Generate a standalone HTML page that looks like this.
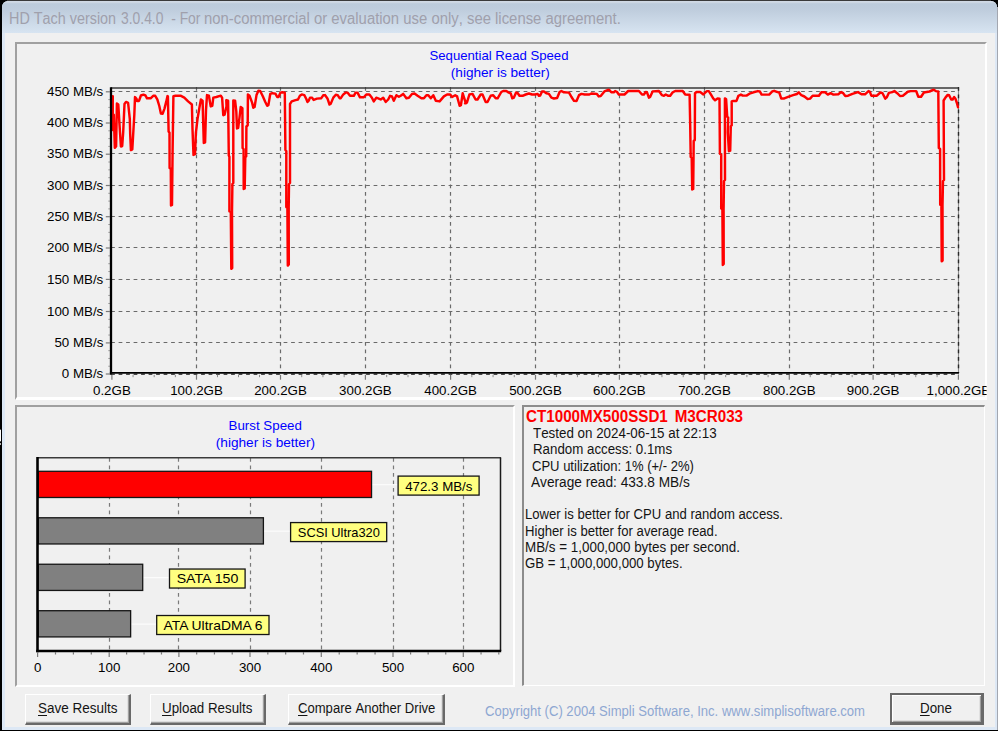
<!DOCTYPE html>
<html><head><meta charset="utf-8"><title>HD Tach</title>
<style>
html,body{margin:0;padding:0}
body{width:998px;height:731px;overflow:hidden;position:relative;background:#000;font-family:"Liberation Sans",sans-serif;font-kerning:none}
div,span{position:absolute;box-sizing:border-box}
#win{left:1.9px;top:1.2px;width:995.4px;height:728.6px;background:#dde8f5;border-radius:6px 6px 0 0;overflow:hidden}
#tb{left:0;top:0;width:100%;height:31.6px;background:linear-gradient(#d2dbe6 0,#ccd6e2 1.5px,#bccbdb 2.8px,#bfcddd 28%,#d7e4f1 100%)}
#tedge{left:7px;top:0;width:984px;height:1.2px;background:#3a3a3a}
#redge{left:997.2px;top:7px;width:.8px;height:722.6px;background:#a3a7b0}
#title{left:0;top:10.4px;width:700px;height:18px}
#title span{top:0;font-size:15.6px;line-height:18px;color:#a0a0ac;white-space:pre;transform-origin:0 0}
#client{left:5px;top:32.6px;width:990.2px;height:694.2px;background:#f0f0f0}
.pn{border-style:solid;border-width:2.4px;border-color:#a0a0a0 #fff #fff #a0a0a0}
#p1{left:14.8px;top:42.2px;width:971.9px;height:357.6px;border-width:2.5px 2.5px 3.1px 2.5px}
#p2{left:14.8px;top:404.9px;width:500.2px;height:282.6px}
#p3{left:521.5px;top:404.9px;width:463.8px;height:281.6px;border-width:2.6px 1.2px 1.4px 2.6px;border-color:#8c8c8c #fff #fff #8c8c8c}
svg{position:absolute;left:0;top:0}
.g{stroke:#6a6a6a;stroke-width:1.2;stroke-dasharray:3.75 3.75}
.t{stroke:#7a7a7a;stroke-width:1.2}
.t2{stroke:#8c8c8c;stroke-width:1}
.a{font:13.33px "Liberation Sans",sans-serif;fill:#000}
.b{font:13.33px "Liberation Sans",sans-serif;fill:#0000ff}
.ms{font-size:15.5px;line-height:18px;white-space:pre;color:#141414;transform-origin:0 0}
#hdr{left:526px;top:407.6px;font:bold 16px/18px "Liberation Sans",sans-serif;color:#ff0000;white-space:pre;word-spacing:2.8px;transform:scaleX(.949);transform-origin:0 0}
.btn{background:#f0f0f0;border-style:solid;border-width:1.3px 2.5px 2.5px 1.3px;border-color:#fff #696969 #696969 #fff;box-shadow:inset -1.2px -1.2px 0 #a0a0a0}
.btn span{top:4.3px}
u{text-decoration:underline;text-underline-offset:1.5px;text-decoration-thickness:1.2px}
#copy{left:484.6px;top:701.6px;color:#8ea7d2}
</style></head><body>
<div id="win"><div id="tb"></div></div>
<div id="redge"></div><div id="tedge"></div>
<div id="title"><span style="left:9.4px;transform:scaleX(.922)">HD Tach version </span><span style="left:120.5px;transform:scaleX(.89)">3.0.4.0  - For </span><span style="left:203.8px;transform:scaleX(.954)">non-commercial or evaluation use only, see license agreement.</span></div>
<div id="client"></div>
<div id="p1" class="pn"></div>
<div id="p2" class="pn"></div>
<div id="p3" class="pn"></div>
<svg width="998" height="731" viewBox="0 0 998 731">
<defs><clipPath id="cl"><rect x="0" y="376" width="986.6" height="24"/></clipPath></defs>
<line x1="111.1" y1="91.5" x2="958.4" y2="91.5" class="g"/>
<line x1="111.1" y1="122.5" x2="958.4" y2="122.5" class="g"/>
<line x1="111.1" y1="153.5" x2="958.4" y2="153.5" class="g"/>
<line x1="111.1" y1="185.5" x2="958.4" y2="185.5" class="g"/>
<line x1="111.1" y1="216.5" x2="958.4" y2="216.5" class="g"/>
<line x1="111.1" y1="247.5" x2="958.4" y2="247.5" class="g"/>
<line x1="111.1" y1="279.5" x2="958.4" y2="279.5" class="g"/>
<line x1="111.1" y1="311.5" x2="958.4" y2="311.5" class="g"/>
<line x1="111.1" y1="342.5" x2="958.4" y2="342.5" class="g"/>
<line x1="196.5" y1="87.05" x2="196.5" y2="373" class="g"/>
<line x1="280.5" y1="87.05" x2="280.5" y2="373" class="g"/>
<line x1="365.5" y1="87.05" x2="365.5" y2="373" class="g"/>
<line x1="450.5" y1="87.05" x2="450.5" y2="373" class="g"/>
<line x1="535.5" y1="87.05" x2="535.5" y2="373" class="g"/>
<line x1="619.5" y1="87.05" x2="619.5" y2="373" class="g"/>
<line x1="704.5" y1="87.05" x2="704.5" y2="373" class="g"/>
<line x1="789.5" y1="87.05" x2="789.5" y2="373" class="g"/>
<line x1="873.5" y1="87.05" x2="873.5" y2="373" class="g"/>
<line x1="958.5" y1="87.05" x2="958.5" y2="373" class="g"/>
<line x1="111" y1="88" x2="958.9" y2="88" stroke="#3a3a3a" stroke-width="1.5"/>
<line x1="958.5" y1="88" x2="958.5" y2="373" stroke="#8a8a8a" stroke-width="1.1"/>
<line x1="958.5" y1="87.05" x2="958.5" y2="373" class="g" style="stroke:#2a2a2a;stroke-width:1.3"/>
<polyline points="112.8,96.3 112.8,130.1 113.8,114.7 114.8,147.8 116.1,146.5 116.9,103.5 118.3,104.5 119.6,126 120.9,146.5 122.2,146 123.2,132.2 124.5,104 126,101.9 128.1,102.9 129.8,118.8 130.2,134.2 130.9,150.1 132.3,149.4 133.3,132.2 134.3,115.3 135,97.1 136.5,98.8 137,100.9 139,100.9 140.9,95.5 143.4,94.7 145.5,95.5 147,98.3 150.6,98.3 153.2,95.8 155.2,95.8 157.3,99.4 159.3,106 160.9,113.5 162.6,113.7 164.5,108.6 166.3,101.4 167.5,96.1 167.9,96.3 168.6,131.6 169.5,132.8 169.6,168 170.8,169 171,205.5 172,205 172.6,150.5 173.4,96.3 175.5,95.7 180.5,95.7 184.3,97.6 188.1,101.4 191.9,104.5 192.5,129.1 193.5,154.9 195,154.2 195.9,132.8 197.5,119 199.4,107.7 200.9,99.5 202.6,100.7 203.2,122.8 203.8,142.9 205.1,142.3 206,110.2 207,95.1 208.9,95.7 210.7,106.4 212.3,105.8 213.3,97.6 216.4,97 220.8,95.7 222.1,97.6 223.3,115.2 224.6,114.6 226.5,106.4 226.3,100.1 228.1,100.7 228.8,155.5 229.4,156.8 229.4,211.3 230.8,212 231.3,268.8 232.2,268 232,212 232.4,184 233.3,183 233.3,100.5 235.1,100.7 236.3,111.4 237,128.4 238.2,127.8 239.5,117.7 240.7,107 242.4,108.3 242.6,148 243.6,149.2 243.7,189 244.7,188.5 245.3,157 246.2,156.5 246.4,126.5 247.7,125.3 247.9,94.4 249.5,95.7 252.1,102.6 253.3,107.7 254.6,107 256.5,95.1 258.4,90.7 260.2,91 262.8,96.3 265.3,102 267.2,105.8 268.4,105.1 270.3,93.8 272.2,93.2 275.4,93.6 277.2,97 278.5,97 280.4,92.8 282.3,92.3 284.8,92.8 285.4,150 286.3,151 286.3,207 287.4,208 287.8,265.6 288.8,264.5 288.7,208 289,184 290,183 290,104 291.7,101.4 295.5,100.1 298,99.5 299.9,95.7 301.8,94.4 304.3,95.1 306.2,98.8 307.5,102 308.7,100.7 310,97.6 311.9,97.6 313.7,99.9 316.9,98.6 321.3,98.2 323.2,95.3 325.1,95.1 327.6,98.8 329.5,104.5 330.7,103.9 333.3,97.6 335.8,94.8 337.7,95.1 339.6,98.2 340.8,98.2 343.3,94.4 345.8,92.6 347.5,92.6 350,95.8 353.8,95.8 355.6,92.6 357.5,92.6 360,97.3 363.8,97.3 366.3,94.5 369.4,94.5 371.9,97.7 373.8,101.4 376.3,97.7 378.2,98.3 380.7,99.5 383.2,97.7 385.7,102 388.2,99.5 390.1,95.8 392,96.4 393.8,100.8 396.4,95.2 398.9,96.8 400.7,95.8 403.2,93.9 406.4,98.3 408.9,97.7 412,93.9 414.5,93.5 417.6,95.8 421.4,98.3 423.9,98.3 426.4,95.2 428.3,95.2 430.8,98.3 433.3,95.2 435.8,100.8 439.6,101.4 443.9,96.4 447.1,94.5 450.2,94.5 452.1,97 455.2,95.2 457.1,96.4 459.6,105.8 460.9,105.2 462.7,93.3 465.9,103.3 465,103.3 466.9,102.7 469.4,94.5 472.5,93.9 475.6,99.5 477.5,99.5 480.7,94.5 482.5,94.5 485.7,102 487.5,102 490.7,95.8 493.2,95.2 495.7,98.3 497.6,98.3 501.3,92 503.2,91 506.3,91 508.8,92.6 510.7,93.3 512.3,98.3 513.8,97.7 516.1,92.6 517.6,93 519.5,95.8 522.6,95.8 525.7,94.5 528.9,93.5 532,94.5 535.1,94.5 537.6,93.9 538.9,95.8 540.2,95.5 542,91.4 543.9,91.4 546.4,93.3 548.9,93.9 551.4,97.7 553.9,98.5 557.1,98 559.6,92 561.4,91 563.9,92.3 569,92.6 571.5,97 574,100.8 576.5,101 579,95.2 581.5,93.9 584.6,94.5 585,94.5 589.4,94.5 591.3,93.5 596.9,93.9 598.8,96.4 600.7,96 604.4,91.4 608.2,89.8 609.4,90.1 611.3,92.3 613.8,92.3 615.1,91 616.9,91.8 618.8,94.5 624.5,94.5 628.2,91 638.9,91 642,94.5 643.9,94.5 645.7,92 647,92.3 648.9,97.7 650.1,97 652.6,91.4 658.9,91 662,95.2 663.9,95.8 665.8,94.5 668.3,95.8 670.2,95.8 672.7,92.3 675.2,91 682.7,91 685.2,94.5 689.6,94.8 690.2,125 690.7,157 691.7,158 692.2,189.5 693.2,189 693.7,141 694.8,140 695,93.3 696.5,92 700.2,92 703.4,94.5 705,92.7 706.9,91.1 708.8,91.1 711.3,95.2 713.2,98.4 715.1,100.3 717.6,98.4 719.5,98.6 719.9,153.8 721.2,154.6 721.2,208.5 722.4,209.3 722.8,264.9 723.7,264 723.6,209 724,181 725,180 724.9,98.4 726.1,99 727.2,116.6 728.2,117.5 727.8,132.4 728.9,151.2 730.2,150.6 730.8,126.1 731.7,125.4 731.7,101.5 733.3,100.9 736.5,100.9 738.4,95.8 740.9,94.6 742.8,95.6 746.5,95.6 750.3,93.3 753.5,92.3 757.9,91.1 759.8,91.4 761.6,94.6 769.2,94.6 772.3,91.4 774.2,90.8 776.8,91.8 779.3,92.7 781.2,98.4 784.3,98.4 788.1,96.9 793.1,95.2 796.9,94 798.8,92.3 801.3,95.2 804.4,96.5 807.6,99 810.1,98.6 812.6,95.8 818.9,95.8 821.4,92.3 825.2,92.3 827.8,94.6 830.6,93.2 833.4,94.6 838.3,94.3 841.1,92.1 843.2,93.2 845.3,96 848.1,95.7 852.4,93.9 858,92.1 861.5,94.3 865,94.3 868.5,91.1 869.9,91.8 871.3,95.7 876.9,95.7 880.4,92.5 882.5,93.2 885.3,98.6 886.7,97.4 888.8,92.9 892.3,92.1 894.4,91.1 897.2,93.2 900,96 902.9,95.7 907.8,91.8 910.6,91.1 916.2,91.1 918.3,96.7 921.1,96.7 923.9,92.5 929.5,91.5 933.7,89.7 935.8,91.1 938.3,91.5 938.8,148 940.1,149 940.2,204.7 941.4,205.5 941.7,261.3 942.6,260.5 942.5,205 943,181 944,180 943.6,100.5 945.6,97.4 947.7,94.9 949.1,95.3 951.2,99.5 952.6,99.5 954.1,97.1 955.5,98.8 956.9,103 958,107.2" fill="none" stroke="#ff0000" stroke-width="2.45" stroke-linejoin="round" stroke-linecap="round"/>
<line x1="111" y1="87.3" x2="111" y2="374.8" stroke="#000" stroke-width="2.3"/>
<line x1="109.9" y1="372.85" x2="958.9" y2="372.85" stroke="#000" stroke-width="1.9"/>
<line x1="111.1" y1="374.2" x2="958.9" y2="374.2" stroke="#111" stroke-width="1.3" stroke-dasharray="3.75 3.75"/>
<line x1="105.8" y1="91.8" x2="110" y2="91.8" class="t"/>
<line x1="108.4" y1="99.6" x2="110" y2="99.6" class="t2"/>
<line x1="108.4" y1="107.4" x2="110" y2="107.4" class="t2"/>
<line x1="108.4" y1="115.2" x2="110" y2="115.2" class="t2"/>
<text x="103.3" y="95.95" text-anchor="end" class="a">450 MB/s</text>
<line x1="105.8" y1="123" x2="110" y2="123" class="t"/>
<line x1="108.4" y1="130.8" x2="110" y2="130.8" class="t2"/>
<line x1="108.4" y1="138.6" x2="110" y2="138.6" class="t2"/>
<line x1="108.4" y1="146.4" x2="110" y2="146.4" class="t2"/>
<text x="103.3" y="127.15" text-anchor="end" class="a">400 MB/s</text>
<line x1="105.8" y1="154.2" x2="110" y2="154.2" class="t"/>
<line x1="108.4" y1="162.02" x2="110" y2="162.02" class="t2"/>
<line x1="108.4" y1="169.85" x2="110" y2="169.85" class="t2"/>
<line x1="108.4" y1="177.68" x2="110" y2="177.68" class="t2"/>
<text x="103.3" y="158.35" text-anchor="end" class="a">350 MB/s</text>
<line x1="105.8" y1="185.5" x2="110" y2="185.5" class="t"/>
<line x1="108.4" y1="193.3" x2="110" y2="193.3" class="t2"/>
<line x1="108.4" y1="201.1" x2="110" y2="201.1" class="t2"/>
<line x1="108.4" y1="208.9" x2="110" y2="208.9" class="t2"/>
<text x="103.3" y="189.65" text-anchor="end" class="a">300 MB/s</text>
<line x1="105.8" y1="216.7" x2="110" y2="216.7" class="t"/>
<line x1="108.4" y1="224.52" x2="110" y2="224.52" class="t2"/>
<line x1="108.4" y1="232.35" x2="110" y2="232.35" class="t2"/>
<line x1="108.4" y1="240.18" x2="110" y2="240.18" class="t2"/>
<text x="103.3" y="220.85" text-anchor="end" class="a">250 MB/s</text>
<line x1="105.8" y1="248" x2="110" y2="248" class="t"/>
<line x1="108.4" y1="255.85" x2="110" y2="255.85" class="t2"/>
<line x1="108.4" y1="263.7" x2="110" y2="263.7" class="t2"/>
<line x1="108.4" y1="271.55" x2="110" y2="271.55" class="t2"/>
<text x="103.3" y="252.15" text-anchor="end" class="a">200 MB/s</text>
<line x1="105.8" y1="279.4" x2="110" y2="279.4" class="t"/>
<line x1="108.4" y1="287.42" x2="110" y2="287.42" class="t2"/>
<line x1="108.4" y1="295.45" x2="110" y2="295.45" class="t2"/>
<line x1="108.4" y1="303.48" x2="110" y2="303.48" class="t2"/>
<text x="103.3" y="283.55" text-anchor="end" class="a">150 MB/s</text>
<line x1="105.8" y1="311.5" x2="110" y2="311.5" class="t"/>
<line x1="108.4" y1="319.35" x2="110" y2="319.35" class="t2"/>
<line x1="108.4" y1="327.2" x2="110" y2="327.2" class="t2"/>
<line x1="108.4" y1="335.05" x2="110" y2="335.05" class="t2"/>
<text x="103.3" y="315.65" text-anchor="end" class="a">100 MB/s</text>
<line x1="105.8" y1="342.9" x2="110" y2="342.9" class="t"/>
<line x1="108.4" y1="350.67" x2="110" y2="350.67" class="t2"/>
<line x1="108.4" y1="358.45" x2="110" y2="358.45" class="t2"/>
<line x1="108.4" y1="366.23" x2="110" y2="366.23" class="t2"/>
<text x="103.3" y="347.05" text-anchor="end" class="a">50 MB/s</text>
<line x1="105.8" y1="374" x2="110" y2="374" class="t"/>
<text x="103.3" y="378.15" text-anchor="end" class="a">0 MB/s</text>
<line x1="111.9" y1="374.8" x2="111.9" y2="379.7" class="t"/>
<line x1="133.05" y1="374.8" x2="133.05" y2="377.2" class="t2"/>
<line x1="154.2" y1="374.8" x2="154.2" y2="377.2" class="t2"/>
<line x1="175.35" y1="374.8" x2="175.35" y2="377.2" class="t2"/>
<text x="111.9" y="394.6" text-anchor="middle" class="a" clip-path="url(#cl)">0.2GB</text>
<line x1="196.5" y1="374.8" x2="196.5" y2="379.7" class="t"/>
<line x1="217.5" y1="374.8" x2="217.5" y2="377.2" class="t2"/>
<line x1="238.5" y1="374.8" x2="238.5" y2="377.2" class="t2"/>
<line x1="259.5" y1="374.8" x2="259.5" y2="377.2" class="t2"/>
<text x="196.5" y="394.6" text-anchor="middle" class="a" clip-path="url(#cl)">100.2GB</text>
<line x1="280.5" y1="374.8" x2="280.5" y2="379.7" class="t"/>
<line x1="301.73" y1="374.8" x2="301.73" y2="377.2" class="t2"/>
<line x1="322.95" y1="374.8" x2="322.95" y2="377.2" class="t2"/>
<line x1="344.17" y1="374.8" x2="344.17" y2="377.2" class="t2"/>
<text x="280.5" y="394.6" text-anchor="middle" class="a" clip-path="url(#cl)">200.2GB</text>
<line x1="365.4" y1="374.8" x2="365.4" y2="379.7" class="t"/>
<line x1="386.7" y1="374.8" x2="386.7" y2="377.2" class="t2"/>
<line x1="408" y1="374.8" x2="408" y2="377.2" class="t2"/>
<line x1="429.3" y1="374.8" x2="429.3" y2="377.2" class="t2"/>
<text x="365.4" y="394.6" text-anchor="middle" class="a" clip-path="url(#cl)">300.2GB</text>
<line x1="450.6" y1="374.8" x2="450.6" y2="379.7" class="t"/>
<line x1="471.83" y1="374.8" x2="471.83" y2="377.2" class="t2"/>
<line x1="493.05" y1="374.8" x2="493.05" y2="377.2" class="t2"/>
<line x1="514.27" y1="374.8" x2="514.27" y2="377.2" class="t2"/>
<text x="450.6" y="394.6" text-anchor="middle" class="a" clip-path="url(#cl)">400.2GB</text>
<line x1="535.5" y1="374.8" x2="535.5" y2="379.7" class="t"/>
<line x1="556.48" y1="374.8" x2="556.48" y2="377.2" class="t2"/>
<line x1="577.45" y1="374.8" x2="577.45" y2="377.2" class="t2"/>
<line x1="598.42" y1="374.8" x2="598.42" y2="377.2" class="t2"/>
<text x="535.5" y="394.6" text-anchor="middle" class="a" clip-path="url(#cl)">500.2GB</text>
<line x1="619.4" y1="374.8" x2="619.4" y2="379.7" class="t"/>
<line x1="640.67" y1="374.8" x2="640.67" y2="377.2" class="t2"/>
<line x1="661.95" y1="374.8" x2="661.95" y2="377.2" class="t2"/>
<line x1="683.23" y1="374.8" x2="683.23" y2="377.2" class="t2"/>
<text x="619.4" y="394.6" text-anchor="middle" class="a" clip-path="url(#cl)">600.2GB</text>
<line x1="704.5" y1="374.8" x2="704.5" y2="379.7" class="t"/>
<line x1="725.7" y1="374.8" x2="725.7" y2="377.2" class="t2"/>
<line x1="746.9" y1="374.8" x2="746.9" y2="377.2" class="t2"/>
<line x1="768.1" y1="374.8" x2="768.1" y2="377.2" class="t2"/>
<text x="704.5" y="394.6" text-anchor="middle" class="a" clip-path="url(#cl)">700.2GB</text>
<line x1="789.3" y1="374.8" x2="789.3" y2="379.7" class="t"/>
<line x1="810.25" y1="374.8" x2="810.25" y2="377.2" class="t2"/>
<line x1="831.2" y1="374.8" x2="831.2" y2="377.2" class="t2"/>
<line x1="852.15" y1="374.8" x2="852.15" y2="377.2" class="t2"/>
<text x="789.3" y="394.6" text-anchor="middle" class="a" clip-path="url(#cl)">800.2GB</text>
<line x1="873.1" y1="374.8" x2="873.1" y2="379.7" class="t"/>
<line x1="894.42" y1="374.8" x2="894.42" y2="377.2" class="t2"/>
<line x1="915.75" y1="374.8" x2="915.75" y2="377.2" class="t2"/>
<line x1="937.08" y1="374.8" x2="937.08" y2="377.2" class="t2"/>
<text x="873.1" y="394.6" text-anchor="middle" class="a" clip-path="url(#cl)">900.2GB</text>
<line x1="958.4" y1="374.8" x2="958.4" y2="379.7" class="t"/>
<text x="958.4" y="394.6" text-anchor="middle" class="a" clip-path="url(#cl)">1,000.2GB</text>
<text x="499" y="59.6" text-anchor="middle" textLength="139" lengthAdjust="spacingAndGlyphs" class="b">Sequential Read Speed</text>
<text x="500.3" y="77.2" text-anchor="middle" textLength="99" lengthAdjust="spacingAndGlyphs" class="b">(higher is better)</text>
<line x1="109.5" y1="458" x2="109.5" y2="650" class="g" style="stroke:#7a7a7a"/>
<line x1="178.5" y1="458" x2="178.5" y2="650" class="g" style="stroke:#7a7a7a"/>
<line x1="250.5" y1="458" x2="250.5" y2="650" class="g" style="stroke:#7a7a7a"/>
<line x1="321.5" y1="458" x2="321.5" y2="650" class="g" style="stroke:#7a7a7a"/>
<line x1="393.5" y1="458" x2="393.5" y2="650" class="g" style="stroke:#7a7a7a"/>
<line x1="463.5" y1="458" x2="463.5" y2="650" class="g" style="stroke:#7a7a7a"/>
<line x1="37.5" y1="457.7" x2="501.1" y2="457.7" stroke="#3a3a3a" stroke-width="1.5"/>
<line x1="500.5" y1="457.7" x2="500.5" y2="651" stroke="#1a1a1a" stroke-width="1.5"/>
<line x1="372.03" y1="484.7" x2="397.5" y2="484.7" stroke="#fcfcfc" stroke-width="1.2"/>
<rect x="38.3" y="471.3" width="333.23" height="26.2" fill="#ff0000" stroke="#151515" stroke-width="1.3"/>
<rect x="398.1" y="476.1" width="81" height="19" fill="#ffff80" stroke="#151515" stroke-width="1.3"/>
<text x="438.8" y="490.5" text-anchor="middle" textLength="67.3" lengthAdjust="spacingAndGlyphs" class="a">472.3 MB/s</text>
<line x1="263.9" y1="531.17" x2="290" y2="531.17" stroke="#fcfcfc" stroke-width="1.2"/>
<rect x="38.3" y="517.77" width="225.1" height="26.2" fill="#808080" stroke="#151515" stroke-width="1.3"/>
<rect x="290.6" y="522.57" width="96.1" height="19" fill="#ffff80" stroke="#151515" stroke-width="1.3"/>
<text x="338.85" y="536.97" text-anchor="middle" textLength="82" lengthAdjust="spacingAndGlyphs" class="a">SCSI Ultra320</text>
<line x1="143.2" y1="577.64" x2="168.9" y2="577.64" stroke="#fcfcfc" stroke-width="1.2"/>
<rect x="38.3" y="564.24" width="104.4" height="26.2" fill="#808080" stroke="#151515" stroke-width="1.3"/>
<rect x="169.5" y="569.04" width="75.6" height="19" fill="#ffff80" stroke="#151515" stroke-width="1.3"/>
<text x="207.5" y="583.44" text-anchor="middle" textLength="61.6" lengthAdjust="spacingAndGlyphs" class="a">SATA 150</text>
<line x1="131.13" y1="624.11" x2="156.1" y2="624.11" stroke="#fcfcfc" stroke-width="1.2"/>
<rect x="38.3" y="610.71" width="92.33" height="26.2" fill="#808080" stroke="#151515" stroke-width="1.3"/>
<rect x="156.7" y="615.51" width="112.3" height="19" fill="#ffff80" stroke="#151515" stroke-width="1.3"/>
<text x="213.05" y="629.91" text-anchor="middle" textLength="99" lengthAdjust="spacingAndGlyphs" class="a">ATA UltraDMA 6</text>
<line x1="37.5" y1="457" x2="37.5" y2="652.2" stroke="#000" stroke-width="2.6"/>
<line x1="36.2" y1="651" x2="501.2" y2="651" stroke="#000" stroke-width="2.4"/>
<line x1="37.6" y1="652" x2="37.6" y2="657" class="t"/>
<line x1="55.5" y1="652" x2="55.5" y2="654.5" class="t"/>
<line x1="73.4" y1="652" x2="73.4" y2="654.5" class="t"/>
<line x1="91.3" y1="652" x2="91.3" y2="654.5" class="t"/>
<text x="37.6" y="671.7" text-anchor="middle" class="a">0</text>
<line x1="109.2" y1="652" x2="109.2" y2="657" class="t"/>
<line x1="126.62" y1="652" x2="126.62" y2="654.5" class="t"/>
<line x1="144.05" y1="652" x2="144.05" y2="654.5" class="t"/>
<line x1="161.48" y1="652" x2="161.48" y2="654.5" class="t"/>
<text x="109.2" y="671.7" text-anchor="middle" class="a">100</text>
<line x1="178.9" y1="652" x2="178.9" y2="657" class="t"/>
<line x1="196.68" y1="652" x2="196.68" y2="654.5" class="t"/>
<line x1="214.45" y1="652" x2="214.45" y2="654.5" class="t"/>
<line x1="232.22" y1="652" x2="232.22" y2="654.5" class="t"/>
<text x="178.9" y="671.7" text-anchor="middle" class="a">200</text>
<line x1="250" y1="652" x2="250" y2="657" class="t"/>
<line x1="267.82" y1="652" x2="267.82" y2="654.5" class="t"/>
<line x1="285.65" y1="652" x2="285.65" y2="654.5" class="t"/>
<line x1="303.48" y1="652" x2="303.48" y2="654.5" class="t"/>
<text x="250" y="671.7" text-anchor="middle" class="a">300</text>
<line x1="321.3" y1="652" x2="321.3" y2="657" class="t"/>
<line x1="339.23" y1="652" x2="339.23" y2="654.5" class="t"/>
<line x1="357.15" y1="652" x2="357.15" y2="654.5" class="t"/>
<line x1="375.07" y1="652" x2="375.07" y2="654.5" class="t"/>
<text x="321.3" y="671.7" text-anchor="middle" class="a">400</text>
<line x1="393" y1="652" x2="393" y2="657" class="t"/>
<line x1="410.57" y1="652" x2="410.57" y2="654.5" class="t"/>
<line x1="428.15" y1="652" x2="428.15" y2="654.5" class="t"/>
<line x1="445.73" y1="652" x2="445.73" y2="654.5" class="t"/>
<text x="393" y="671.7" text-anchor="middle" class="a">500</text>
<line x1="463.3" y1="652" x2="463.3" y2="657" class="t"/>
<line x1="481.05" y1="652" x2="481.05" y2="654.5" class="t"/>
<line x1="498.8" y1="652" x2="498.8" y2="654.5" class="t"/>
<text x="463.3" y="671.7" text-anchor="middle" class="a">600</text>
<text x="265.2" y="429.6" text-anchor="middle" class="b">Burst Speed</text>
<text x="265.4" y="447.3" text-anchor="middle" textLength="99.3" lengthAdjust="spacingAndGlyphs" class="b">(higher is better)</text>
</svg>
<span id="hdr">CT1000MX500SSD1 M3CR033</span>
<span class="ms" style="left:533.1px;top:424.1px;transform:scaleX(0.8624)">Tested on 2024-06-15 at 22:13</span>
<span class="ms" style="left:532.6px;top:440.3px;transform:scaleX(0.8586)">Random access: 0.1ms</span>
<span class="ms" style="left:532.0px;top:456.6px;transform:scaleX(0.8405)">CPU utilization: 1% (+/- 2%)</span>
<span class="ms" style="left:531.4px;top:472.8px;transform:scaleX(0.8817)">Average read: 433.8 MB/s</span>
<span class="ms" style="left:525.2px;top:505.4px;transform:scaleX(0.8459)">Lower is better for CPU and random access.</span>
<span class="ms" style="left:525.2px;top:521.6px;transform:scaleX(0.8466)">Higher is better for average read.</span>
<span class="ms" style="left:525.2px;top:537.9px;transform:scaleX(0.8648)">MB/s = 1,000,000 bytes per second.</span>
<span class="ms" style="left:525.2px;top:554.1px;transform:scaleX(0.8528)">GB = 1,000,000,000 bytes.</span>
<div class="btn" style="left:24.9px;top:694px;width:106.2px;height:30.7px"><span class="ms" style="left:12.5px;transform:scaleX(.871)"><u>S</u>ave Results</span></div>
<div class="btn" style="left:150px;top:694px;width:115.8px;height:30.7px"><span class="ms" style="left:11px;transform:scaleX(.86)"><u>U</u>pload Results</span></div>
<div class="btn" style="left:288.4px;top:694px;width:156.6px;height:30.7px"><span class="ms" style="left:8.3px;transform:scaleX(.8435)"><u>C</u>ompare Another Drive</span></div>
<span id="copy" class="ms" style="transform:scaleX(.8435)">Copyright (C) 2004 Simpli Software, Inc. www.simplisoftware.com</span>
<div class="btn" style="left:890.2px;top:693.2px;width:93.7px;height:31.9px;border-width:2.2px 3.6px 3.6px 2.2px;border-color:#696969;box-shadow:inset 1.1px 1.1px 0 #fff,inset -1.2px -1.2px 0 #a0a0a0"><span class="ms" style="left:28px;top:4.2px;transform:scaleX(.863)"><u>D</u>one</span></div>
<div style="left:0;top:428.9px;width:1.35px;height:12.7px;background:#5c5c5c"></div><div style="left:0;top:429.9px;width:.9px;height:10.7px;background:#fff"></div><div style="left:0;top:443.2px;width:1px;height:2.2px;background:#b4b4b4"></div>
</body></html>
